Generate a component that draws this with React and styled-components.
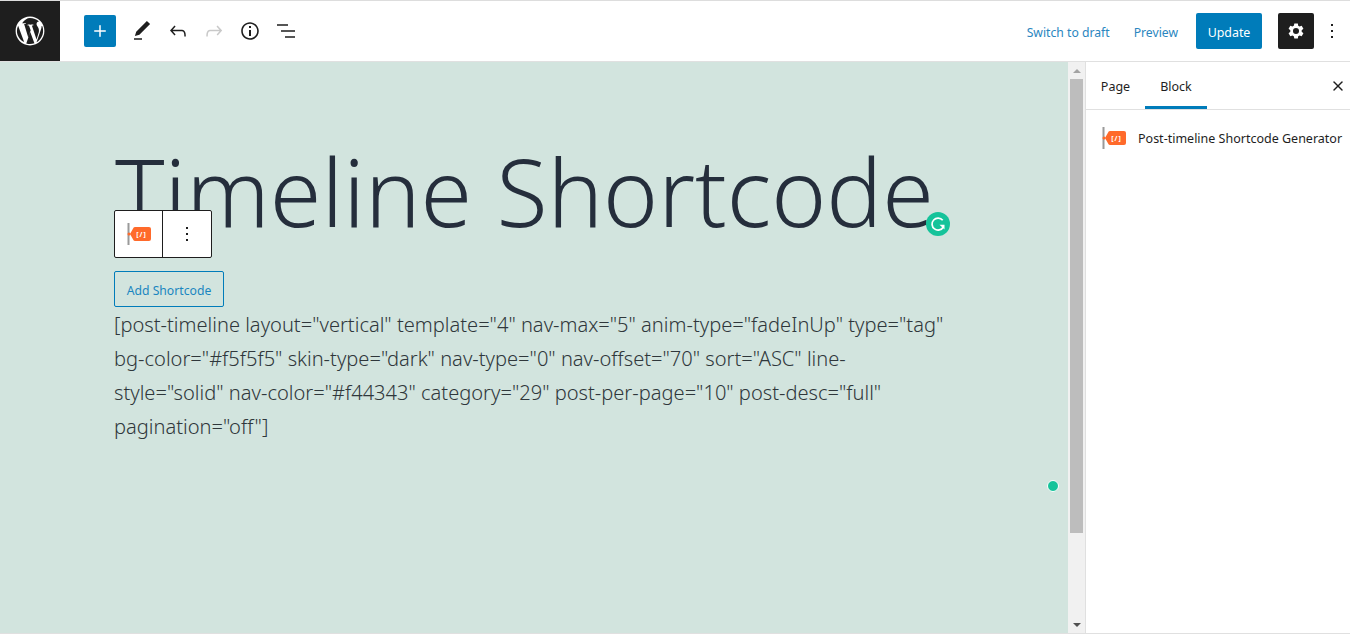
import React from "react";
import styled, { createGlobalStyle } from "styled-components";
import { Plus, X } from "lucide-react";

const GlobalStyle = createGlobalStyle`
  html, body { margin: 0; padding: 0; height: 100%; overflow: hidden; background: #fff; }
  #root { height: 100%; }
  * { box-sizing: border-box; }
`;

const Page = styled.div`
  display: flex;
  flex-direction: column;
  width: 1350px;
  height: 634px;
  font-family: "Noto Sans", "Open Sans", sans-serif;
  border-top: 1px solid #ddd;
  border-bottom: 1px solid #e0e0e0;
`;

const Header = styled.header`
  display: flex;
  align-items: center;
  flex: 0 0 61px;
  height: 61px;
  background: #fff;
  border-bottom: 1px solid #e0e0e0;
`;

const LogoBox = styled.div`
  display: flex;
  align-items: center;
  justify-content: center;
  width: 60px;
  height: 60px;
  background: #1e1e1e;
`;

const Tools = styled.div`
  display: flex;
  align-items: center;
  margin-left: 24px;
  gap: 12px;
`;

const AddButton = styled.div`
  display: flex;
  align-items: center;
  justify-content: center;
  width: 32px;
  height: 32px;
  margin-right: 2px;
  background: #007cba;
  border-radius: 2px;
  color: #fff;
`;

const ToolIcon = styled.div`
  display: flex;
  align-items: center;
  justify-content: center;
  width: 24px;
  height: 24px;
  color: ${(props) => (props.$disabled ? "#c9c9c9" : "#1e1e1e")};
`;

const Actions = styled.div`
  display: flex;
  align-items: center;
  margin-left: auto;
`;

const LinkAction = styled.span`
  padding-top: 2px;
  font-size: 12.2px;
  color: #2a86c0;
  margin-right: ${(props) => props.$gap}px;
`;

const UpdateButton = styled.div`
  display: flex;
  align-items: center;
  justify-content: center;
  width: 66px;
  height: 36px;
  padding-top: 2px;
  background: #007cba;
  border-radius: 2px;
  color: #fff;
  font-size: 12.4px;
  margin-right: 16px;
`;

const SettingsButton = styled.div`
  display: flex;
  align-items: center;
  justify-content: center;
  width: 36px;
  height: 36px;
  background: #1e1e1e;
  border-radius: 2px;
  margin-right: 6px;
`;

const More = styled.div`
  display: flex;
  align-items: center;
  justify-content: center;
  width: 24px;
  height: 24px;
  margin-right: 6px;
  color: #1e1e1e;
`;

const Body = styled.div`
  display: flex;
  flex: 1;
  min-height: 0;
`;

const Canvas = styled.main`
  position: relative;
  flex: 0 0 1068px;
  background: #d2e4de;
  padding: 74px 0 0 114px;
`;

const Title = styled.h1`
  margin: 0;
  width: 840px;
  padding-left: 1px;
  font-size: 93.4px;
  line-height: 110px;
  font-weight: 300;
  color: #252e3c;
  white-space: nowrap;
`;

const BlockToolbar = styled.div`
  position: absolute;
  left: 114px;
  top: 148px;
  display: flex;
  height: 48px;
  background: #fff;
  border: 1px solid #1e1e1e;
  border-radius: 2px;
`;

const ToolbarCell = styled.div`
  display: flex;
  align-items: center;
  justify-content: center;
  width: ${(props) => props.$w}px;
  border-left: ${(props) => (props.$divided ? "1px solid #1e1e1e" : "none")};
  color: #1e1e1e;
`;

const ShortcodeButton = styled.div`
  display: flex;
  align-items: center;
  justify-content: center;
  width: 110px;
  height: 36px;
  margin-top: 25px;
  padding-top: 2px;
  border: 1px solid #007cba;
  border-radius: 2px;
  font-size: 12.2px;
  color: #1a86c0;
`;

const Code = styled.p`
  margin: 1px 0 0;
  width: 836px;
  font-size: 20.08px;
  line-height: 34px;
  font-weight: 300;
  color: #2f373b;
`;

const GrammarlyBadge = styled.div`
  position: absolute;
  left: 926px;
  top: 150px;
  width: 24px;
  height: 24px;
`;

const GrammarlyDot = styled.div`
  position: absolute;
  left: 1047px;
  top: 418px;
  width: 12px;
  height: 12px;
  border-radius: 50%;
  background: #15c39a;
  border: 1.5px solid #fff;
`;

const Scrollbar = styled.div`
  display: flex;
  flex-direction: column;
  align-items: center;
  flex: 0 0 17px;
  background: #f1f1f1;
`;

const Arrow = styled.div`
  flex: 0 0 17px;
  display: flex;
  align-items: center;
  justify-content: center;
`;

const ArrowShape = styled.div`
  width: 0;
  height: 0;
  border-left: 4px solid transparent;
  border-right: 4px solid transparent;
  ${(props) =>
    props.$up ? "border-bottom: 4px solid #a3a3a3;" : "border-top: 4px solid #505050;"}
`;

const Thumb = styled.div`
  flex: 0 0 454px;
  width: 13px;
  background: #bdbdbd;
`;

const Track = styled.div`
  flex: 1;
`;

const Sidebar = styled.aside`
  flex: 1;
  background: #fff;
  border-left: 1px solid #e0e0e0;
`;

const SidebarTabs = styled.div`
  display: flex;
  align-items: stretch;
  height: 48px;
  border-bottom: 1px solid #e0e0e0;
`;

const Tab = styled.div`
  display: flex;
  align-items: center;
  justify-content: center;
  width: ${(props) => props.$w}px;
  padding-top: 1px;
  font-size: 12.5px;
  color: #1e1e1e;
  box-shadow: ${(props) => (props.$active ? "inset 0 -3px 0 #007cba" : "none")};
`;

const CloseButton = styled.div`
  display: flex;
  align-items: center;
  justify-content: center;
  width: 24px;
  margin-left: auto;
  color: #1e1e1e;
`;

const BlockCard = styled.div`
  display: flex;
  align-items: center;
  gap: 12px;
  padding: 16px 0 0 16px;
  font-size: 12.5px;
  color: #1e1e1e;
  white-space: nowrap;
`;

const WpLogo = () => (
  <svg width="32" height="32" viewBox="0 0 24 24" fill="#fff">
    <path d="M12 1.2C6 1.2 1.2 6 1.2 12S6 22.8 12 22.8 22.8 18 22.8 12 18 1.2 12 1.2zm0 1c2.6 0 5 1 6.8 2.7h-.2c-1 0-1.7.9-1.7 1.8 0 .8.5 1.5 1 2.3.4.7.8 1.5.8 2.8 0 .9-.3 1.9-.8 3.3l-1 3.3-3.5-10.5.9-.1c.4 0 .4-.7 0-.6 0 0-1.2.1-1.9.1s-1.9-.1-1.9-.1c-.5 0-.5.6-.1.6l.8.1 1.3 3.5-1.8 5.4L7.6 6.8l1-.1c.4 0 .4-.7 0-.6 0 0-1.2.1-2 .1h-.5C7.8 3.7 9.8 2.2 12 2.2zM3.1 8l4.5 12.3C4.5 18.8 2.2 15.6 2.2 12c0-1.4.3-2.8.9-4zm18 .2c.5.9.7 2 .7 3.8 0 3.6-2 6.8-4.9 8.5l3-8.7c.6-1.4.8-2.5.8-3.5l.4-.1zm-8.9 4.6l3.1 8.4c-1.2.4-2.2.6-3.3.6-1 0-1.9-.1-2.8-.4l3-8.6z" />
  </svg>
);

const PenIcon = () => (
  <svg width="24" height="24" viewBox="0 0 24 24" fill="currentColor">
    <path d="M20.1 5.1 16.9 2 6.2 12.7l-1.3 4.4 4.5-1.3L20.1 5.1zM4 20.8h8v-1.5H4v1.5z" />
  </svg>
);

const UndoIcon = () => (
  <svg width="24" height="24" viewBox="0 0 24 24" fill="currentColor">
    <path d="M18.3 11.7c-.6-.6-1.400-.9-2.300-.9H6.700l2.900-3.300-1.100-1-4.500 5 4.500 5.100 1.100-1-2.900-3.300H16c.5 0 .9.2 1.300.5 1 1 1 3.400 1 4.500v.3h1.500v-.2c0-1.500 0-4.300-1.500-5.700z" />
  </svg>
);

const RedoIcon = () => (
  <svg width="24" height="24" viewBox="0 0 24 24" fill="currentColor">
    <path d="M15.600 6.500l-1.100 1 2.900 3.300H8c-.9 0-1.700.3-2.300.9-1.400 1.500-1.400 4.200-1.400 5.600v.2h1.500v-.3c0-1.100 0-3.500 1-4.500.3-.3.700-.5 1.300-.5h9.400l-2.900 3.300 1.100 1 4.500-5.100-4.600-4.900z" />
  </svg>
);

const InfoIcon = () => (
  <svg width="24" height="24" viewBox="0 0 24 24" fill="currentColor">
    <path d="M12 3.200c-4.800 0-8.800 3.900-8.800 8.800 0 4.800 3.900 8.800 8.800 8.800 4.800 0 8.800-3.900 8.800-8.800 0-4.800-4-8.800-8.800-8.800zm0 16c-4 0-7.200-3.300-7.200-7.200C4.800 8 8 4.800 12 4.800s7.200 3.300 7.200 7.200c0 4-3.200 7.200-7.200 7.200zM11 17h2v-6h-2v6zm0-8h2V7h-2v2z" />
  </svg>
);

const OutlineIcon = () => (
  <svg width="24" height="24" viewBox="0 0 24 24" fill="currentColor">
    <path d="M3 5.200h11v1.600H3zM7 11.200h14v1.600H7zM11 17.200h10v1.600H11z" />
  </svg>
);

const GearIcon = () => (
  <svg width="22" height="22" viewBox="0 0 24 24" fill="#fff">
    <path d="M19.200 12.900v-1.800l1.900-1.500-1.900-3.300-2.300.9-1.500-.9L15 3.800h-3.800L10.600 6.300l-1.500.9-2.300-.9-1.900 3.300 1.900 1.500v1.800l-1.900 1.500 1.900 3.300 2.300-.9 1.500.9.6 2.500H15l.4-2.500 1.500-.9 2.300.9 1.900-3.300-1.900-1.500zM13 15.300a3.300 3.300 0 1 1 0-6.600 3.300 3.300 0 0 1 0 6.600z" transform="translate(-1 0)" />
  </svg>
);

const MoreIcon = () => (
  <svg width="24" height="24" viewBox="0 0 24 24" fill="currentColor">
    <path d="M13 19h-2v-2h2v2zm0-6h-2v-2h2v2zm0-6h-2V5h2v2z" />
  </svg>
);

const TimelineIcon = () => (
  <svg width="24" height="24" viewBox="0 0 24 24">
    <rect x="0.500" y="1" width="2" height="22" fill="#9a9a9a" />
    <circle cx="2" cy="12" r="1.500" fill="#ff6a2b" />
    <path d="M8 5h14a2 2 0 0 1 2 2v10a2 2 0 0 1-2 2H8a2 2 0 0 1-1.500-.8L3 12l3.500-6.200A2 2 0 0 1 8 5z" fill="#ff6a2b" />
    <text x="14.500" y="14.500" fontSize="7" fontWeight="700" letterSpacing="1" fill="#fff" textAnchor="middle" fontFamily="Noto Sans, sans-serif">
      [/]
    </text>
  </svg>
);

const GrammarlyIcon = () => (
  <svg width="24" height="24" viewBox="0 0 24 24">
    <circle cx="12" cy="12" r="12" fill="#15c39a" />
    <path d="M16.700 8.300A6 6 0 1 0 17.300 15" fill="none" stroke="#fff" strokeWidth="1.700" />
    <path d="M13.500 12.800h5v4.700z" fill="#fff" />
  </svg>
);

export default function App() {
  return (
    <Page>
      <GlobalStyle />
      <Header>
        <LogoBox>
          <WpLogo />
        </LogoBox>
        <Tools>
          <AddButton>
            <Plus size={18} strokeWidth={2} />
          </AddButton>
          <ToolIcon>
            <PenIcon />
          </ToolIcon>
          <ToolIcon>
            <UndoIcon />
          </ToolIcon>
          <ToolIcon $disabled>
            <RedoIcon />
          </ToolIcon>
          <ToolIcon>
            <InfoIcon />
          </ToolIcon>
          <ToolIcon>
            <OutlineIcon />
          </ToolIcon>
        </Tools>
        <Actions>
          <LinkAction $gap={24}>Switch to draft</LinkAction>
          <LinkAction $gap={18}>Preview</LinkAction>
          <UpdateButton>Update</UpdateButton>
          <SettingsButton>
            <GearIcon />
          </SettingsButton>
          <More>
            <MoreIcon />
          </More>
        </Actions>
      </Header>
      <Body>
        <Canvas>
          <Title>Timeline Shortcode</Title>
          <BlockToolbar>
            <ToolbarCell $w={47}>
              <TimelineIcon />
            </ToolbarCell>
            <ToolbarCell $w={49} $divided>
              <MoreIcon />
            </ToolbarCell>
          </BlockToolbar>
          <ShortcodeButton>Add Shortcode</ShortcodeButton>
          <Code>
            [post-timeline layout="vertical" template="4" nav-max="5" anim-type="fadeInUp" type="tag"
            bg-color="#f5f5f5" skin-type="dark" nav-type="0" nav-offset="70" sort="ASC" line-style="solid"
            nav-color="#f44343" category="29" post-per-page="10" post-desc="full" pagination="off"]
          </Code>
          <GrammarlyBadge>
            <GrammarlyIcon />
          </GrammarlyBadge>
          <GrammarlyDot />
        </Canvas>
        <Scrollbar>
          <Arrow>
            <ArrowShape $up />
          </Arrow>
          <Thumb />
          <Track />
          <Arrow>
            <ArrowShape />
          </Arrow>
        </Scrollbar>
        <Sidebar>
          <SidebarTabs>
            <Tab $w={59}>Page</Tab>
            <Tab $w={62} $active>
              Block
            </Tab>
            <CloseButton>
              <X size={16} strokeWidth={2.2} />
            </CloseButton>
          </SidebarTabs>
          <BlockCard>
            <TimelineIcon />
            Post-timeline Shortcode Generator
          </BlockCard>
        </Sidebar>
      </Body>
    </Page>
  );
}
